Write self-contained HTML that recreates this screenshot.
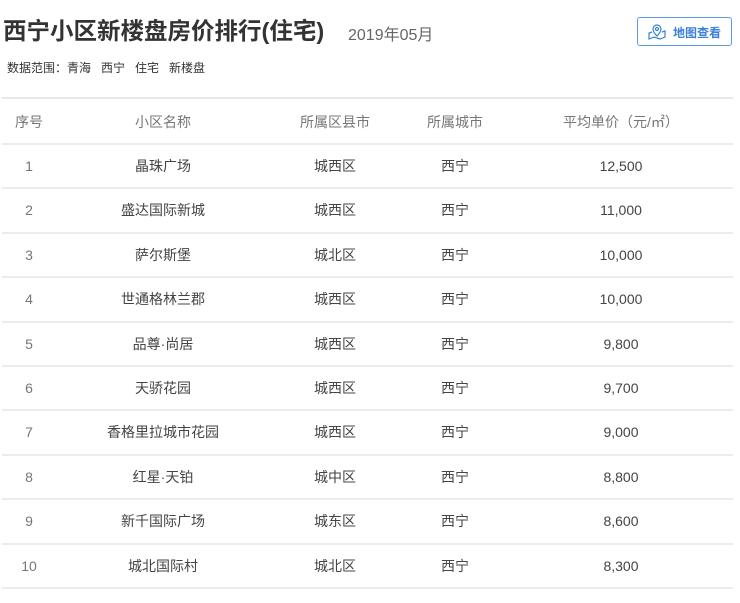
<!DOCTYPE html><html><head><meta charset="utf-8"><style>
body{margin:0;width:740px;height:603px;background:#fff;font-family:"Liberation Sans","Noto Sans CJK SC",sans-serif;position:relative;overflow:hidden}
.a{position:absolute;white-space:nowrap}
.t{left:3px;top:12px;font-size:23.5px;font-weight:bold;color:#333}
.d{left:348px;top:21px;font-size:16px;color:#666}
.btn{left:637px;top:17px;width:95px;height:29px;border:1px solid #5b9be6;border-radius:3px;color:#3a7fd8;font-size:12px;font-weight:bold;box-sizing:border-box}
.s{left:7px;top:59px;font-size:12px;color:#333}
.ln{position:absolute;left:2px;width:731px;height:1px;background:#e5e5e5}
.c{position:absolute;text-align:center;font-size:14px;color:#444;transform:translateY(-50%)}
.h{color:#777}
</style></head><body>
<div class="a t">西宁小区新楼盘房价排行(住宅)</div>
<div class="a d">2019年05月</div>
<div class="a btn"><svg style="position:absolute;left:10px;top:5px" width="18" height="17" viewBox="0 0 18 17" fill="none" stroke="#3a7fd8" stroke-width="1.2"><path d="M9 13s-4-4-4-7a4 4 0 0 1 8 0c0 3-4 7-4 7z"/><circle cx="9" cy="6" r="1.5"/><path d="M4 9L1 10v6l5-2 6 2 5-2V8l-3 1"/></svg><span style="position:absolute;left:35px;top:6px">地图查看</span></div>
<div class="a s">数据范围：青海&nbsp;&nbsp;&nbsp;西宁&nbsp;&nbsp;&nbsp;住宅&nbsp;&nbsp;&nbsp;新楼盘</div>
<div class="ln" style="top:97px;height:2px;background:#e8e8e8"></div>
<div id="tb"></div>
<script>
var cols=[[0,58],[58,210],[268,134],[402,106],[508,226]];
var rows=[["序号","小区名称","所属区县市","所属城市","平均单价（元/㎡）"],
["1","晶珠广场","城西区","西宁","12,500"],["2","盛达国际新城","城西区","西宁","11,000"],["3","萨尔斯堡","城北区","西宁","10,000"],["4","世通格林兰郡","城西区","西宁","10,000"],["5","品尊·尚居","城西区","西宁","9,800"],["6","天骄花园","城西区","西宁","9,700"],["7","香格里拉城市花园","城西区","西宁","9,000"],["8","红星·天铂","城中区","西宁","8,800"],["9","新千国际广场","城东区","西宁","8,600"],["10","城北国际村","城北区","西宁","8,300"]];
var h="";
rows.forEach(function(r,i){var y=i==0?122:166+44.4*(i-1);
r.forEach(function(t,j){h+='<div class="c'+(i==0||j==0?' h':'')+'" style="left:'+cols[j][0]+'px;width:'+cols[j][1]+'px;top:'+y+'px">'+t+'</div>';});
h+='<div class="ln" style="top:'+Math.round(143+44.4*i)+'px;height:2px;background:#ececec"></div>';});
document.getElementById("tb").innerHTML=h;
</script>
</body></html>
